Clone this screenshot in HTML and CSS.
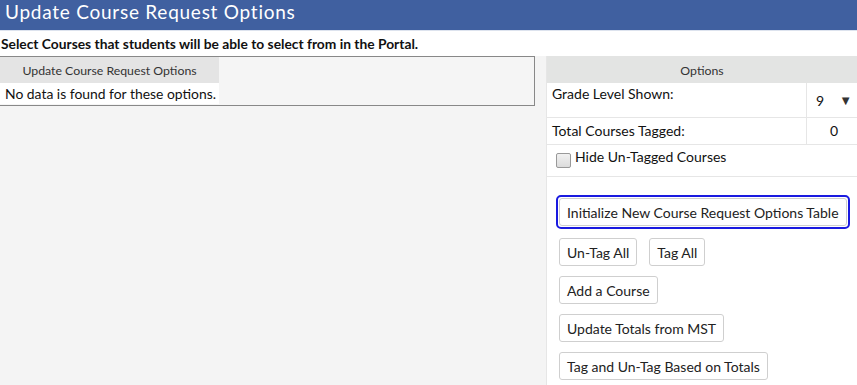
FILE: index.html
```html
<!DOCTYPE html>
<html>
<head>
<meta charset="utf-8">
<link rel="stylesheet" href="styles.css">
</head>
<body>
<div class="titlebar">Update Course Request Options</div>
<div class="subtitle">Select Courses that students will be able to select from in the Portal.</div>
<div class="main">
  <div class="left">
    <div class="box">
      <table class="grid">
        <tr><th>Update Course Request Options</th></tr>
        <tr><td>No data is found for these options.</td></tr>
      </table>
    </div>
  </div>
  <div class="right">
    <div class="opt-head">Options</div>
    <div class="opt-row tall">
      <div class="opt-label">Grade Level Shown:</div>
      <div class="opt-value sel"><span class="sel-val">9</span><span class="arrow">&#9660;</span></div>
    </div>
    <div class="opt-row">
      <div class="opt-label mid">Total Courses Tagged:</div>
      <div class="opt-value center">0</div>
    </div>
    <div class="check-row">
      <span class="checkbox"></span><span class="check-label">Hide Un-Tagged Courses</span>
    </div>
    <div class="buttons">
      <div class="btn-row"><span class="focus-ring"><button class="btn">Initialize New Course Request Options Table</button></span></div>
      <div class="btn-row"><button class="btn">Un-Tag All</button><button class="btn">Tag All</button></div>
      <div class="btn-row"><button class="btn">Add a Course</button></div>
      <div class="btn-row"><button class="btn">Update Totals from MST</button></div>
      <div class="btn-row"><button class="btn">Tag and Un-Tag Based on Totals</button></div>
    </div>
  </div>
</div>
</body>
</html>
```
FILE: styles.css
```css
html, body {
  margin: 0;
  padding: 0;
  background: #ffffff;
  font-family: Lato, "Noto Sans", sans-serif;
  color: #222;
  overflow: hidden;
  height: 385px;
}
.titlebar {
  height: 31px;
  background: #4060a0;
  color: #ffffff;
  font-size: 19px;
  line-height: 24px;
  padding-left: 5px;
  letter-spacing: 0.75px;
  border-bottom: 1px solid #dde3ee;
  box-sizing: border-box;
}
.subtitle {
  height: 25px;
  font-size: 13.8px;
  font-weight: bold;
  line-height: 26px;
  padding-left: 1px;
  color: #111;
  box-sizing: border-box;
}
.main {
  display: flex;
  height: 329px;
}
.left {
  width: 546px;
  background: #f4f4f4;
  flex: none;
}
.box {
  width: 535px;
  height: 50px;
  box-sizing: border-box;
  border: 1px solid #888;
  border-left: none;
  background: #f5f5f5;
}
.grid {
  border-collapse: collapse;
}
.grid th {
  width: 219px;
  height: 26px;
  background: #e4e4e4;
  font-weight: normal;
  color: #333;
  padding: 0;
  font-size: 12.3px;
}
.grid td {
  height: 21px;
  background: #ffffff;
  padding: 0 0 0 5px;
  font-size: 13.9px;
  color: #111;
}
.right {
  flex: 1;
  background: #ffffff;
  border-left: 1px solid #e6e6e6;
}
.opt-head {
  height: 27px;
  background: #e3e4e3;
  text-align: center;
  font-size: 12.3px;
  line-height: 29px;
  color: #333;
}
.opt-row {
  display: flex;
  height: 27px;
  border-bottom: 1px solid #e6e6e6;
  box-sizing: border-box;
}
.opt-row.tall {
  height: 35px;
}
.opt-label {
  flex: 1;
  font-size: 14px;
  padding-left: 5px;
  padding-top: 2px;
  color: #111;
}
.opt-label.mid {
  padding-top: 4px;
}
.opt-value {
  width: 51px;
  border-left: 1px solid #e6e6e6;
  font-size: 14px;
  color: #111;
  box-sizing: border-box;
}
.opt-value.center {
  text-align: center;
  padding-top: 4px;
  padding-left: 4px;
}
.sel {
  display: flex;
  justify-content: space-between;
  padding: 9px 5px 0 9px;
}
.arrow {
  font-size: 13px;
  color: #333;
  padding-top: 0;
}
.check-row {
  height: 32px;
  border-bottom: 1px solid #e6e6e6;
  display: flex;
  align-items: flex-start;
  padding-left: 9px;
  box-sizing: border-box;
}
.checkbox {
  width: 13px;
  height: 13px;
  margin-top: 8px;
  border: 1px solid #999;
  border-radius: 2px;
  background: linear-gradient(#f1f1f1, #dcdcdc);
}
.check-label {
  font-size: 14px;
  margin-left: 4px;
  margin-top: 3px;
  color: #111;
}
.buttons {
  padding: 18px 0 0 12px;
  display: flex;
  flex-direction: column;
  gap: 10px;
}
.btn-row {
  display: flex;
  gap: 12px;
}
.focus-ring {
  display: inline-flex;
  border: 2px solid #1a1ae0;
  border-radius: 5px;
  padding: 1px;
  margin-left: -3px;
  margin-bottom: -1px;
}
.btn {
  font-family: Lato, "Noto Sans", sans-serif;
  font-size: 14px;
  color: #222;
  background: #ffffff;
  border: 1px solid #cfcfcf;
  border-radius: 3px;
  height: 28px;
  padding: 0 7px;
  margin: 0;
}
```
